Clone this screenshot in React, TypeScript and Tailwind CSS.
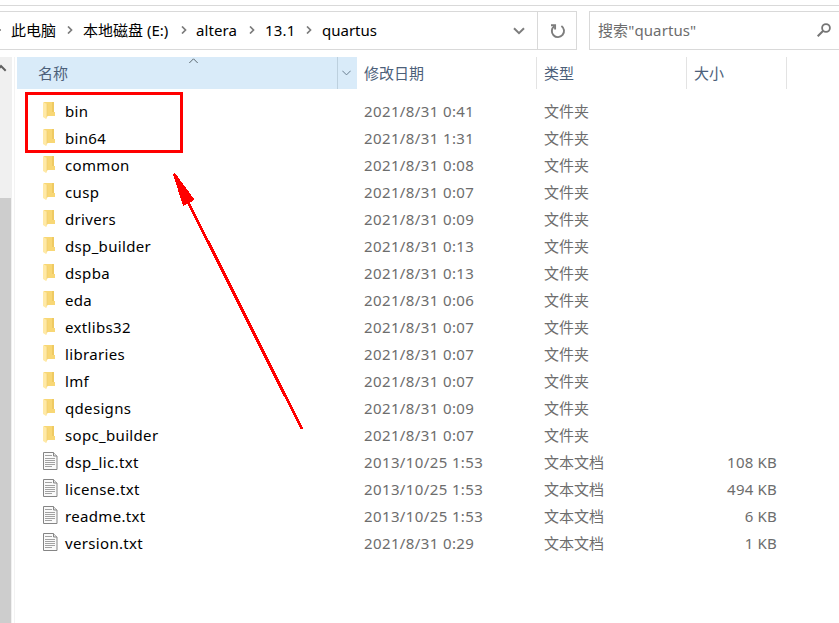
// File explorer window showing the quartus install folder
import React from "react";

type Entry = {
  name: string;
  date: string;
  size?: string;
};

const entries: Entry[] = [
  { name: "bin", date: "2021/8/31 0:41" },
  { name: "bin64", date: "2021/8/31 1:31" },
  { name: "common", date: "2021/8/31 0:08" },
  { name: "cusp", date: "2021/8/31 0:07" },
  { name: "drivers", date: "2021/8/31 0:09" },
  { name: "dsp_builder", date: "2021/8/31 0:13" },
  { name: "dspba", date: "2021/8/31 0:13" },
  { name: "eda", date: "2021/8/31 0:06" },
  { name: "extlibs32", date: "2021/8/31 0:07" },
  { name: "libraries", date: "2021/8/31 0:07" },
  { name: "lmf", date: "2021/8/31 0:07" },
  { name: "qdesigns", date: "2021/8/31 0:09" },
  { name: "sopc_builder", date: "2021/8/31 0:07" },
  { name: "dsp_lic.txt", date: "2013/10/25 1:53", size: "108 KB" },
  { name: "license.txt", date: "2013/10/25 1:53", size: "494 KB" },
  { name: "readme.txt", date: "2013/10/25 1:53", size: "6 KB" },
  { name: "version.txt", date: "2021/8/31 0:29", size: "1 KB" },
];

const FolderIcon = () => (
  <svg className="w-4 h-[18px] mt-px shrink-0" viewBox="0 0 16 18">
    <path d="M1 0h10v10h1v4H1z" fill="#f8d775" />
    <path d="M9 0h2v10H9z" fill="#efca62" />
    <path d="M0 0l4 2v14l-1 1-3-2z" fill="#ffe9a6" />
    <path d="M4 2v13" stroke="#edcb6c" strokeWidth="0.6" />
  </svg>
);

const FileIcon = () => (
  <svg className="w-4 h-[18px] mb-px shrink-0" viewBox="0 0 16 18">
    <path d="M.5.5h10l3.5 3.5v13.5H.5z" fill="#fafafa" stroke="#858585" />
    <path d="M10.5.5v3.5H14" fill="#e4e4e4" stroke="#858585" />
    <path
      d="M2 3.5h7M2 6.5h10M2 8.5h10M2 10.5h10M2 12.5h10M2 14.5h7"
      stroke="#a2a2a2"
      fill="none"
    />
  </svg>
);

const Separator = () => (
  <svg
    className="w-[6px] h-2 shrink-0"
    viewBox="0 0 6 8"
    fill="none"
    stroke="#7b7b7b"
    strokeWidth="1.7"
  >
    <path d="M1 .5L4.5 4 1 7.5" />
  </svg>
);

const AddressBar = () => (
  <div className="h-[39px] w-[577px] flex border border-l-0 border-[#d9d9d9] text-black">
    <div className="w-[537px] flex items-center pl-[11px] pb-[2px] relative">
      <span className="absolute left-0 top-[17px] w-px h-[2px] bg-[#999]" />
      <span className="w-[56px] shrink-0">此电脑</span>
      <Separator />
      <span className="ml-[10px] w-[98px] shrink-0">本地磁盘 (E:)</span>
      <Separator />
      <span className="ml-[9px] w-[53px] shrink-0 tracking-[0.1px]">altera</span>
      <Separator />
      <span className="ml-[10px] w-[41px] shrink-0 tracking-[0.2px]">13.1</span>
      <Separator />
      <span className="ml-[10px]">quartus</span>
      <svg
        className="w-3 h-2 ml-auto mr-[12px] mt-[3px]"
        viewBox="0 0 12 8"
        fill="none"
        stroke="#7d7d7d"
        strokeWidth="2"
      >
        <path d="M1 1.2l5 5 5-5" />
      </svg>
    </div>
    <div className="flex-1 flex items-center justify-center border-l border-[#d9d9d9]">
      <svg
        className="w-4 h-4 mt-[1px] ml-[1px]"
        viewBox="0 0 16 16"
        fill="none"
        stroke="#7d7d7d"
        strokeWidth="1.9"
      >
        <path d="M11.4 3A6.1 6.1 0 1 1 4.2 3.2" />
        <path d="M1 2.3h4.1v4.2" />
      </svg>
    </div>
  </div>
);

const SearchBox = () => (
  <div className="flex-1 h-[39px] flex items-center ml-3 pl-[8px] pr-2 pb-[2px] border border-r-0 border-[#d9d9d9] text-[#6d6d6d]">
    <span className="tracking-[0.1px]">搜索"quartus"</span>
    <svg
      className="w-[14px] h-[14px] ml-auto"
      viewBox="0 0 14 14"
      fill="none"
      stroke="#757575"
      strokeWidth="1.8"
    >
      <circle cx="9" cy="5" r="3.9" />
      <path d="M6.2 7.8L.7 13.3" strokeWidth="2" />
    </svg>
  </div>
);

const ScrollBar = () => (
  <div className="w-3 h-full bg-[#f0f0f0] shrink-0">
    <div className="h-[141px] pt-[7px]">
      <svg
        className="w-[7px] h-2"
        viewBox="0 0 7 8"
        fill="none"
        stroke="#606060"
        strokeWidth="2"
      >
        <path d="M-2 5.5l3-3.5 4.7 4.7" />
      </svg>
    </div>
    <div className="w-[11px] h-[425px] bg-[#cdcdcd]" />
  </div>
);

const ColumnHeader = () => (
  <div className="h-8 flex items-center text-[#4c607a]">
    <div className="w-[340px] h-8 flex bg-[#d9ebf9] relative">
      <span className="w-[320px] pl-[21px] flex items-center">名称</span>
      <svg
        className="absolute left-[172px] top-[1px] w-[9px] h-[6px]"
        viewBox="0 0 9 6"
        fill="none"
        stroke="#5c6870"
      >
        <path d="M.3 5L4.5.8 8.7 5" />
      </svg>
      <span className="w-5 border-l border-[#bdd0de] flex items-center justify-center">
        <svg
          className="w-[9px] h-[6px] mr-[3px]"
          viewBox="0 0 9 6"
          fill="none"
          stroke="#6a7f91"
        >
          <path d="M.3.7l4.2 4.2L8.7.7" />
        </svg>
      </span>
    </div>
    <span className="w-[180px] h-8 pl-[7px] flex items-center border-r border-[#e3e3e3]">
      修改日期
    </span>
    <span className="w-[150px] h-8 pl-[7px] flex items-center border-r border-[#e3e3e3]">
      类型
    </span>
    <span className="w-[100px] h-8 pl-[7px] flex items-center border-r border-[#e3e3e3]">
      大小
    </span>
  </div>
);

const Row = ({ name, date, size }: Entry) => (
  <div className="h-[27px] flex items-center text-[#6d6d6d]">
    <div className="w-[321px] h-[27px] flex items-center text-black">
      {size ? <FileIcon /> : <FolderIcon />}
      <span className="ml-[6px] tracking-[0.33px]">{name}</span>
    </div>
    <span className="w-[180px] tracking-[0.38px]">{date}</span>
    <span className="w-[133px]">{size ? "文本文档" : "文件夹"}</span>
    <span className="w-[100px] text-right tracking-[0.2px]">{size}</span>
  </div>
);

const App = () => (
  <div className="w-[839px] h-[623px] relative overflow-hidden bg-white flex flex-col pt-[5px] text-[15px] leading-5 whitespace-nowrap font-['Noto_Sans','Noto_Sans_CJK_SC',sans-serif]">
    <div className="h-px bg-[#d9d9d9] shrink-0" />
    <div className="flex mt-[5px] shrink-0">
      <AddressBar />
      <SearchBox />
    </div>
    <div className="flex-1 flex mt-[7px] min-h-0">
      <ScrollBar />
      <div className="w-[3px] ml-[2px] border-l border-[#f3f3f3] shrink-0" />
      <div>
        <ColumnHeader />
        <div className="pt-[8px] pl-[26px]">
          {entries.map((entry) => (
            <Row key={entry.name} {...entry} />
          ))}
        </div>
      </div>
    </div>
    {/* Red callout around bin and bin64 */}
    <div className="absolute left-[25px] top-[92px] w-[158px] h-[61px] border-3 border-[#ff0000]" />
    <svg
      className="absolute left-[160px] top-[160px] w-[160px] h-[280px]"
      viewBox="0 0 160 280"
      shapeRendering="crispEdges"
    >
      <path d="M28.5 43L142 269" stroke="#ff0000" strokeWidth="3" />
      <path d="M13 14.5l1-1.5h1l19 26-1.5 2-8.500 4.500h-1z" fill="#ff0000" />
    </svg>
  </div>
);

export default App;
